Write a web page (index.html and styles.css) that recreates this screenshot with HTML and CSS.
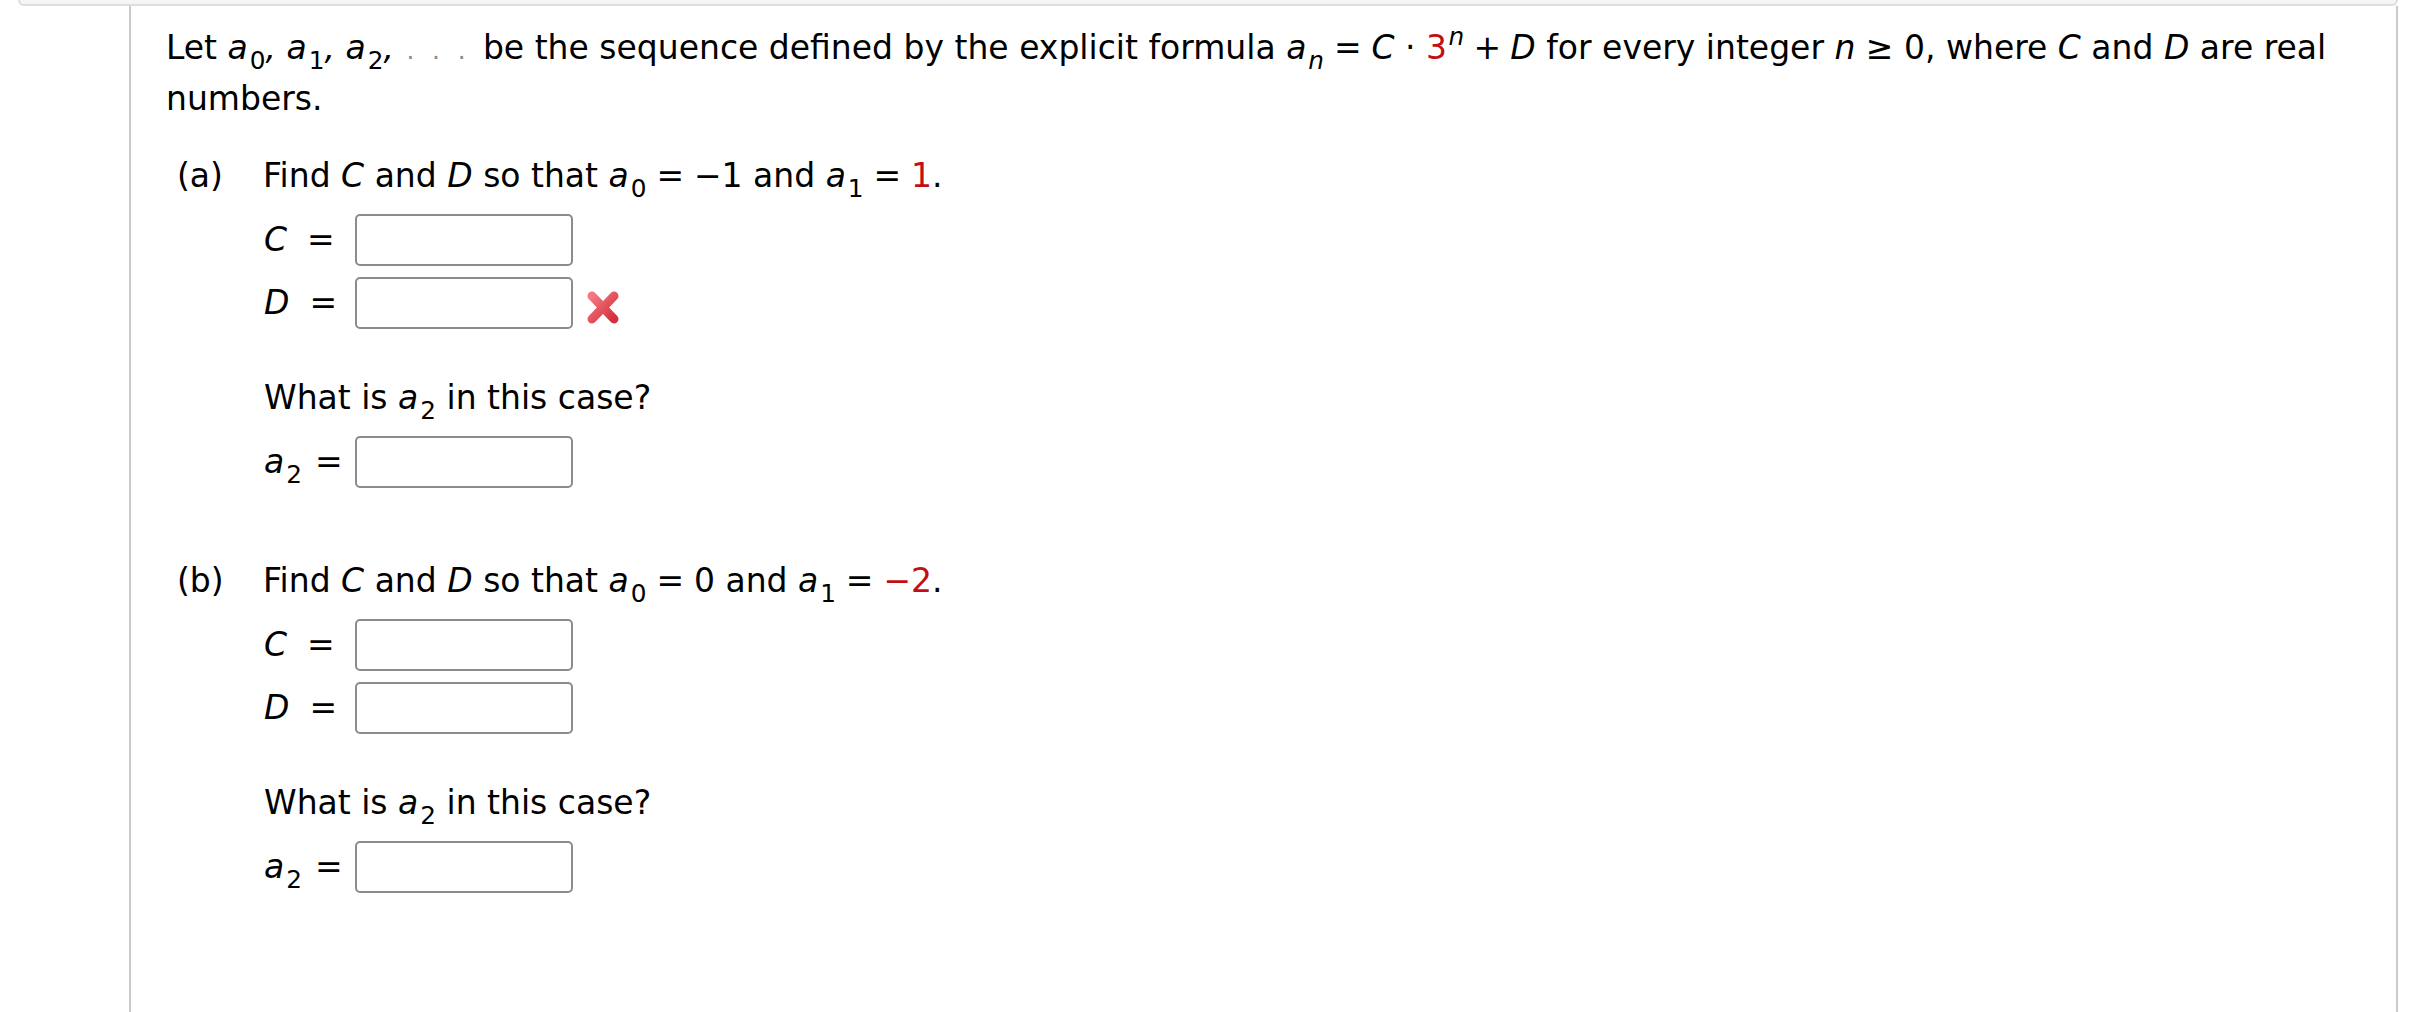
FILE: index.html
```html
<!DOCTYPE html>
<html lang="en">
<head>
<meta charset="utf-8">
<title>Sequence question</title>
<link rel="stylesheet" href="styles.css">
</head>
<body>
<div class="topbar"></div>
<div class="panel">
  <p class="intro">Let <i>a</i><sub>0</sub><span class="cm">,</span> <i>a</i><sub>1</sub><span class="cm">,</span> <i>a</i><sub>2</sub><span class="cm">,</span> <span class="dots">. . .</span> be the sequence defined by the explicit formula <i>a</i><sub><i>n</i></sub><span class="rel">=</span><i>C</i> · <span class="red">3</span><sup><i>n</i></sup><span class="bin">+</span><i>D</i> for every integer <i>n</i> ≥ 0, where <i>C</i> and <i>D</i> are real numbers.</p>

  <div class="part">
    <div class="part-head"><span class="plabel">(a)</span><span>Find <i>C</i> and <i>D</i> so that <i>a</i><sub>0</sub><span class="rel">=</span>−1 and <i>a</i><sub>1</sub><span class="rel">=</span><span class="red">1</span>.</span></div>
    <div class="part-body">
      <div class="row first"><span class="lbl"><span class="v"><i>C</i></span><span class="eq">=</span></span><input class="box" type="text"></div>
      <div class="row"><span class="lbl"><span class="v"><i>D</i></span><span class="eq">=</span></span><input class="box" type="text"><svg class="xmark" viewBox="0 0 34 35" width="34" height="35"><defs><linearGradient id="xg" x1="0" y1="0" x2="1" y2="1"><stop offset="0" stop-color="#f47880"/><stop offset="1" stop-color="#d42f3b"/></linearGradient></defs><path d="M6 6 L28 29 M28 6 L6 29" stroke="url(#xg)" stroke-width="9" stroke-linecap="round" fill="none"/></svg></div>
      <div class="q2">What is <i>a</i><sub>2</sub> in this case?</div>
      <div class="row after-q"><span class="lbl"><span class="v"><i>a</i><sub>2</sub></span><span class="eq eq-a">=</span></span><input class="box" type="text"></div>
    </div>
  </div>

  <div class="part part-b">
    <div class="part-head"><span class="plabel">(b)</span><span>Find <i>C</i> and <i>D</i> so that <i>a</i><sub>0</sub><span class="rel">=</span>0 and <i>a</i><sub>1</sub><span class="rel">=</span><span class="red">−2</span>.</span></div>
    <div class="part-body">
      <div class="row first"><span class="lbl"><span class="v"><i>C</i></span><span class="eq">=</span></span><input class="box" type="text"></div>
      <div class="row"><span class="lbl"><span class="v"><i>D</i></span><span class="eq">=</span></span><input class="box" type="text"></div>
      <div class="q2">What is <i>a</i><sub>2</sub> in this case?</div>
      <div class="row after-q"><span class="lbl"><span class="v"><i>a</i><sub>2</sub></span><span class="eq eq-a">=</span></span><input class="box" type="text"></div>
    </div>
  </div>
</div>
</body>
</html>
```

FILE: styles.css
```css
html, body {
  margin: 0;
  height: 100%;
  overflow: hidden;
  background: #fff;
}

body {
  font-family: "DejaVu Sans", Verdana, sans-serif;
  font-size: 33px;
  color: #000;
}

.topbar {
  height: 4px;
  margin: 0 25px 0 18px;
  background: #f5f5f5;
  border: 2px solid #dedede;
  border-top: 0;
  border-radius: 0 0 6px 6px;
}

.panel {
  box-sizing: border-box;
  height: calc(100% - 6px);
  margin: 0 25px 0 129px;
  padding: 18px 0 0 35px;
  border-left: 2px solid #cbcbcb;
  border-right: 2px solid #cbcbcb;
}

.intro {
  margin: 0;
  max-width: 2225px;
  line-height: 48px;
}

sub {
  font-size: 75%;
  vertical-align: -0.4em;
  line-height: 0;
  margin-left: 0.08em;
}

sup {
  font-size: 75%;
  vertical-align: 0.55em;
  line-height: 0;
  margin-left: 0.06em;
}

.cm {
  font-style: italic;
}

.dots {
  color: #8a8a8a;
  font-size: 75%;
  letter-spacing: 0.2em;
  margin: 0 0.08em;
}

.rel {
  margin: 0 0.3em;
}

.bin {
  margin: 0 0.28em;
}

.red {
  color: #c40d14;
}

.part {
  margin: 29px 0 0 11px;
}

.part-b {
  margin-top: 69px;
}

.part-head {
  display: flex;
  line-height: 48px;
}

.plabel {
  width: 86px;
  flex: none;
}

.part-body {
  margin-left: 87px;
}

.row {
  display: flex;
  align-items: center;
  margin-top: 11px;
  line-height: 40px;
}

.row.first,
.row.after-q {
  margin-top: 14px;
}

.lbl {
  display: flex;
  align-items: baseline;
  width: 91px;
  flex: none;
}

.eq {
  margin-left: 20px;
}

.eq-a {
  margin-left: 13px;
}

.box {
  box-sizing: border-box;
  width: 218px;
  height: 52px;
  margin: 0;
  padding: 0 8px;
  border: 2px solid #8b8b90;
  border-radius: 5px;
  background: #fff;
  font: inherit;
}

.xmark {
  flex: none;
  margin: 9px 0 0 13px;
}

.q2 {
  margin-top: 45px;
  line-height: 48px;
}
```
